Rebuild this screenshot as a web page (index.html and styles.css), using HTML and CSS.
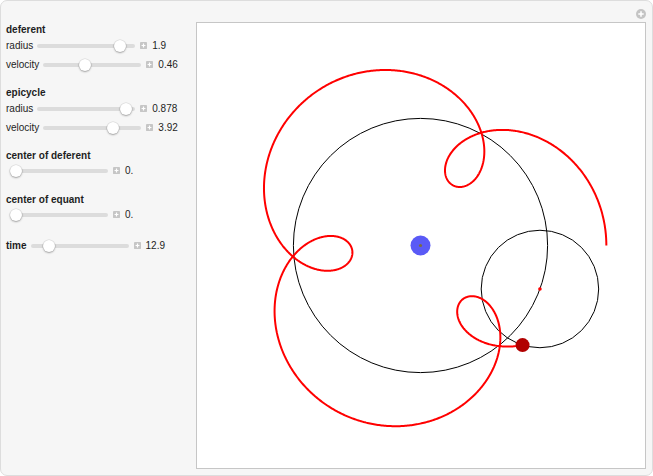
FILE: index.html
```html
<!DOCTYPE html>
<html>
<head>
<meta charset="utf-8">
<title>Epicycle</title>
<link rel="stylesheet" href="styles.css">
</head>
<body>
<div class="frame">
  <div class="controls">
    <div class="group">
      <div class="heading">deferent</div>
      <div class="row">
        <span class="label">radius</span>
        <div class="track"><span class="thumb" style="left:83px"></span></div>
        <svg class="plus" viewBox="0 0 8 8"><rect width="8" height="8" rx="1"/><path d="M4 1.8V6.2M1.8 4H6.2"/></svg>
        <span class="value">1.9</span>
      </div>
      <div class="row">
        <span class="label">velocity</span>
        <div class="track"><span class="thumb" style="left:42px"></span></div>
        <svg class="plus" viewBox="0 0 8 8"><rect width="8" height="8" rx="1"/><path d="M4 1.8V6.2M1.8 4H6.2"/></svg>
        <span class="value">0.46</span>
      </div>
    </div>
    <div class="group group-epi">
      <div class="heading">epicycle</div>
      <div class="row">
        <span class="label">radius</span>
        <div class="track"><span class="thumb" style="left:89px"></span></div>
        <svg class="plus" viewBox="0 0 8 8"><rect width="8" height="8" rx="1"/><path d="M4 1.8V6.2M1.8 4H6.2"/></svg>
        <span class="value">0.878</span>
      </div>
      <div class="row">
        <span class="label">velocity</span>
        <div class="track"><span class="thumb" style="left:70px"></span></div>
        <svg class="plus" viewBox="0 0 8 8"><rect width="8" height="8" rx="1"/><path d="M4 1.8V6.2M1.8 4H6.2"/></svg>
        <span class="value">3.92</span>
      </div>
    </div>
    <div class="group group-cod">
      <div class="heading">center of deferent</div>
      <div class="row row-solo">
        <div class="track"><span class="thumb" style="left:6px"></span></div>
        <svg class="plus" viewBox="0 0 8 8"><rect width="8" height="8" rx="1"/><path d="M4 1.8V6.2M1.8 4H6.2"/></svg>
        <span class="value">0.</span>
      </div>
    </div>
    <div class="group group-coe">
      <div class="heading">center of equant</div>
      <div class="row row-solo">
        <div class="track"><span class="thumb" style="left:6px"></span></div>
        <svg class="plus" viewBox="0 0 8 8"><rect width="8" height="8" rx="1"/><path d="M4 1.8V6.2M1.8 4H6.2"/></svg>
        <span class="value">0.</span>
      </div>
    </div>
    <div class="group group-time">
      <div class="row">
        <span class="label label-bold">time</span>
        <div class="track"><span class="thumb" style="left:18px"></span></div>
        <svg class="plus" viewBox="0 0 8 8"><rect width="8" height="8" rx="1"/><path d="M4 1.8V6.2M1.8 4H6.2"/></svg>
        <span class="value">12.9</span>
      </div>
    </div>
  </div>
  <div class="plot">
    <svg class="canvas" width="448" height="445" viewBox="0 0 448 445">
      <circle id="deferent" cx="223.5" cy="222.5" r="127.1" fill="none" stroke="#000" stroke-width="1"/>
      <circle id="epicycle" cx="0" cy="0" r="58.7" fill="none" stroke="#000" stroke-width="1"/>
      <path id="curve" d="" fill="none" stroke="#ff0000" stroke-width="2" stroke-linejoin="round"/>
      <circle cx="223.5" cy="222.5" r="10" fill="#5a5af6"/>
      <circle cx="223.5" cy="222.5" r="1.6" fill="#7d6d3e"/>
      <circle id="epicenter" cx="0" cy="0" r="1.8" fill="#ff0000"/>
      <circle id="planet" cx="0" cy="0" r="7" fill="#b10000"/>
    </svg>
  </div>
  <svg class="corner-icon" viewBox="0 0 10 10"><circle cx="5" cy="5" r="5"/><path d="M5 2.3V7.7M2.3 5H7.7"/></svg>
</div>
<script src="script.js"></script>
</body>
</html>
```

FILE: styles.css
```css
html, body {
  margin: 0;
  padding: 0;
  background: #ffffff;
}

.frame {
  position: relative;
  width: 653px;
  height: 476px;
  box-sizing: border-box;
  border: 1px solid #dddddd;
  border-radius: 7px;
  background: #f6f6f6;
  display: flex;
  align-items: flex-start;
  font-family: "Liberation Sans", Arial, sans-serif;
  font-size: 10px;
  color: #1e1e1e;
}

.controls {
  width: 195px;
  box-sizing: border-box;
  padding: 22px 0 0 5px;
  display: flex;
  flex-direction: column;
}

.group {
  display: flex;
  flex-direction: column;
}

.group-epi {
  margin-top: 12px;
}

.group-cod {
  margin-top: 12px;
}

.group-coe {
  margin-top: 14px;
}

.group-time {
  margin-top: 13px;
}

.heading {
  font-weight: bold;
  line-height: 13px;
  height: 13px;
}

.row {
  display: flex;
  align-items: center;
  height: 19px;
}

.row-solo {
  height: 17px;
  padding-left: 4px;
}

.label {
  margin-right: 4px;
}

.label-bold {
  font-weight: bold;
}

.track {
  position: relative;
  width: 98px;
  height: 4px;
  border-radius: 2px;
  background: #dcdcdc;
  margin-right: 5px;
  flex: none;
}

.thumb {
  position: absolute;
  top: 50%;
  width: 12px;
  height: 12px;
  margin-left: -6px;
  margin-top: -6px;
  border-radius: 50%;
  background: #ffffff;
  box-shadow: 0 0 0 0.5px rgba(0, 0, 0, 0.12), 0 1px 2px rgba(0, 0, 0, 0.3);
}

.plus {
  width: 7px;
  height: 7px;
  margin-right: 5px;
  flex: none;
}

.plus rect {
  fill: #c6c6c6;
}

.plus path {
  stroke: #ffffff;
  stroke-width: 1.4;
  fill: none;
}

.value {
  line-height: 12px;
}

.plot {
  width: 450px;
  height: 447px;
  box-sizing: border-box;
  margin-top: 21px;
  border: 1px solid #c6c6c6;
  background: #ffffff;
  flex: none;
}

.canvas {
  display: block;
}

.corner-icon {
  position: absolute;
  top: 8px;
  right: 6px;
  width: 10px;
  height: 10px;
}

.corner-icon circle {
  fill: #c4c4c4;
}

.corner-icon path {
  stroke: #ffffff;
  stroke-width: 1.5;
  fill: none;
}
```

FILE: script.js
```js
(function () {
  var R = 1.9, r = 0.878;
  var a = 0.46, b = 0.46 * 3.92;
  var T = 12.9;
  var S = 66.9;
  var cx = 223.5, cy = 222.5;
  var n = 1600;
  var d = '';
  for (var i = 0; i <= n; i++) {
    var t = T * i / n;
    var x = cx + S * (R * Math.cos(a * t) + r * Math.cos(b * t));
    var y = cy - S * (R * Math.sin(a * t) + r * Math.sin(b * t));
    d += (i ? 'L' : 'M') + x.toFixed(2) + ' ' + y.toFixed(2);
  }
  document.getElementById('curve').setAttribute('d', d);
  var ex = cx + S * R * Math.cos(a * T);
  var ey = cy - S * R * Math.sin(a * T);
  var px = ex + S * r * Math.cos(b * T);
  var py = ey - S * r * Math.sin(b * T);
  var epi = document.getElementById('epicycle');
  epi.setAttribute('cx', ex);
  epi.setAttribute('cy', ey);
  epi.setAttribute('r', S * r);
  var ec = document.getElementById('epicenter');
  ec.setAttribute('cx', ex);
  ec.setAttribute('cy', ey);
  var p = document.getElementById('planet');
  p.setAttribute('cx', px);
  p.setAttribute('cy', py);
})();
```
